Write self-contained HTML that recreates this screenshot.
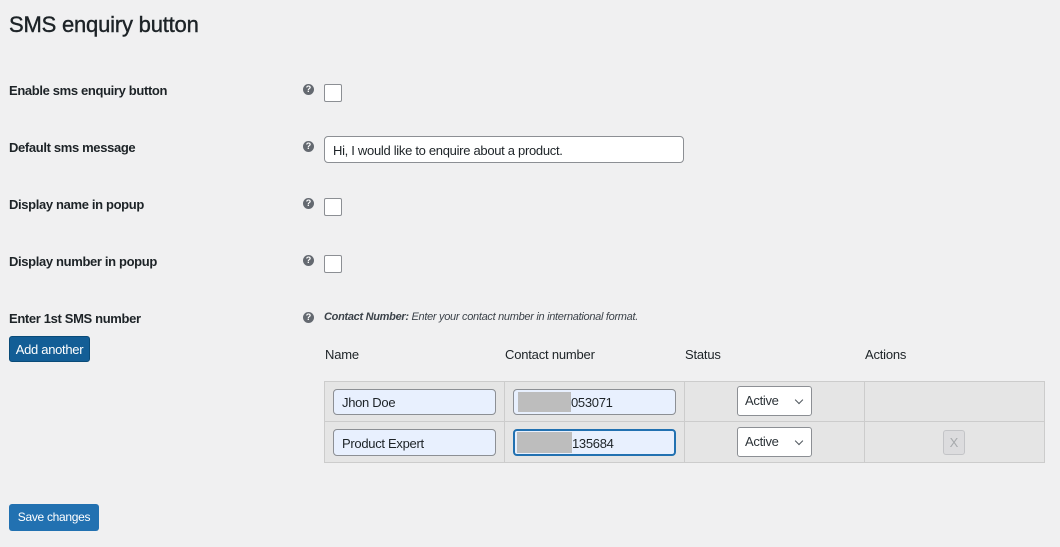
<!DOCTYPE html>
<html><head><style>
body{margin:0;width:1060px;height:547px;background:#f0f0f1;font-family:"Liberation Sans",sans-serif;color:#1d2327;font-size:13px;position:relative;overflow:hidden}
.a{position:absolute}
h1{position:absolute;left:9px;top:12px;margin:0;font-size:22px;font-weight:400;letter-spacing:-0.2px;-webkit-text-stroke:0.4px #1d2327}
.lbl{position:absolute;left:9px;font-weight:bold;font-size:13px;letter-spacing:-0.35px}
.q{position:absolute;left:303px;width:11px;height:11px;border-radius:50%;background:#646970;color:#fff;font-size:9px;font-weight:bold;text-align:center;line-height:11px}
.cb{position:absolute;left:324px;width:16px;height:16px;border:1px solid #8c8f94;background:#fff;border-radius:2px}
.inp{position:absolute;height:24px;border:1px solid #8c8f94;border-radius:4px;background:#e8f0fe;box-sizing:border-box;padding-left:8px;font-size:13px;letter-spacing:-0.3px}
.sel{position:absolute;left:737px;width:75px;height:30px;border:1px solid #8c8f94;border-radius:3px;background:#fff;box-sizing:border-box;padding-left:7px;line-height:28px;color:#2c3338;letter-spacing:-0.3px}
.sel:after{content:"";position:absolute;right:9px;top:10px;width:5px;height:5px;border-right:1.5px solid #50575e;border-bottom:1.5px solid #50575e;transform:rotate(45deg)}
.btn{position:absolute;background:#2271b1;color:#fff;border-radius:3px;font-size:13px;text-align:center;letter-spacing:-0.3px}
.th{position:absolute;top:347px;font-size:13px;letter-spacing:-0.2px}
</style></head><body>
<h1>SMS enquiry button</h1>
<div class="lbl" style="top:83px">Enable sms enquiry button</div>
<div class="q" style="top:84px">?</div><div class="cb" style="top:84px"></div>
<div class="lbl" style="top:140px">Default sms message</div>
<div class="q" style="top:141px">?</div>
<div class="a" style="left:324px;top:136px;width:360px;height:27px;border:1px solid #8c8f94;border-radius:4px;background:#fff;box-sizing:border-box;padding-left:8px;line-height:27px;letter-spacing:-0.3px">Hi, I would like to enquire about a product.</div>
<div class="lbl" style="top:197px">Display name in popup</div>
<div class="q" style="top:198px">?</div><div class="cb" style="top:198px"></div>
<div class="lbl" style="top:254px">Display number in popup</div>
<div class="q" style="top:255px">?</div><div class="cb" style="top:255px"></div>
<div class="lbl" style="top:311px">Enter 1st SMS number</div>
<div class="q" style="top:312px">?</div>
<div class="a" style="left:324px;top:311px;font-size:11px;font-style:italic;color:#3c434a;letter-spacing:-0.3px"><b>Contact Number:</b> Enter your contact number in international format.</div>
<div class="btn" style="left:9px;top:336px;width:81px;height:26px;line-height:26px;background:#135e96;border:1px solid #0a4b78;box-sizing:border-box">Add another</div>
<div class="th" style="left:325px">Name</div>
<div class="th" style="left:505px">Contact number</div>
<div class="th" style="left:685px">Status</div>
<div class="th" style="left:865px">Actions</div>
<div class="a" style="left:324px;top:381px;width:721px;height:82px;background:#e5e5e5;border:1px solid #ccc;box-sizing:border-box"></div>
<div class="a" style="left:324px;top:421px;width:720px;height:1px;background:#ccc"></div>
<div class="a" style="left:504px;top:381px;width:1px;height:81px;background:#ccc"></div>
<div class="a" style="left:684px;top:381px;width:1px;height:81px;background:#ccc"></div>
<div class="a" style="left:864px;top:381px;width:1px;height:81px;background:#ccc"></div>
<div class="inp" style="left:333px;top:389px;width:163px;height:26px;line-height:26px">Jhon Doe</div>
<div class="inp" style="left:513px;top:389px;width:163px;height:26px;line-height:26px;padding-left:57px">053071</div>
<div class="a" style="left:518px;top:392px;width:53px;height:20px;background:#bdbdbd"></div>
<div class="inp" style="left:333px;top:429px;width:163px;height:27px;line-height:27px">Product Expert</div>
<div class="inp" style="left:513px;top:429px;width:163px;height:27px;line-height:25px;padding-left:57px;border:2px solid #2271b1">135684</div>
<div class="a" style="left:517px;top:432px;width:55px;height:21px;background:#bdbdbd"></div>
<div class="sel" style="top:386px">Active</div>
<div class="sel" style="top:427px">Active</div>
<div class="a" style="left:943px;top:430px;width:22px;height:25px;border:1px solid #c3c4c7;border-radius:3px;background:#dcdcde;box-sizing:border-box;text-align:center;line-height:23px;color:#a7aaad">X</div>
<div class="btn" style="left:9px;top:504px;width:90px;height:27px;line-height:27px;font-size:12px">Save changes</div>
</body></html>
